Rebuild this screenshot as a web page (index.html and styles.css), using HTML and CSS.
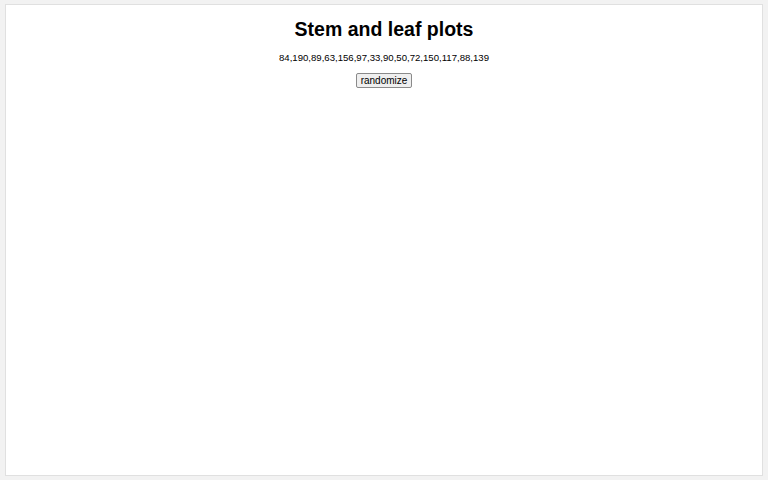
FILE: index.html
```html
<!DOCTYPE html>
<html>
<head>
<meta charset="utf-8">
<link rel="stylesheet" href="styles.css">
</head>
<body>
<div class="panel">
  <h1 class="title">Stem and leaf plots</h1>
  <p class="data">84,190,89,63,156,97,33,90,50,72,150,117,88,139</p>
  <button class="btn">randomize</button>
</div>
</body>
</html>
```
FILE: styles.css
```css
html, body { margin: 0; padding: 0; }
body {
  background: #f2f2f2;
  font-family: "Liberation Sans", Arial, sans-serif;
  padding: 4px 5px 4px 5px;
  height: 480px;
  box-sizing: border-box;
}
.panel {
  background: #fff;
  border: 1px solid #e0e0e0;
  height: 472px;
  width: 758px;
  box-sizing: border-box;
  display: flex;
  flex-direction: column;
  align-items: center;
}
.title {
  font-size: 19.5px;
  font-weight: bold;
  margin: 13px 0 0 0;
  color: #000;
}
.data {
  font-size: 9.6px;
  margin: 11px 0 0 0;
  color: #000;
}
.btn {
  margin-top: 10px;
  font-family: "Liberation Sans", Arial, sans-serif;
  font-size: 10px;
  padding: 1px 4px;
  border: 1px solid #8a8a8a;
  border-radius: 2px;
  background: #efefef;
  color: #000;
}
```
